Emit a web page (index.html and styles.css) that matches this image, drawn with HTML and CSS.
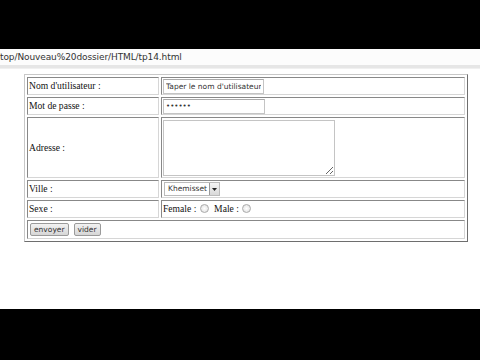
FILE: index.html
```html
<!DOCTYPE html>
<html>
<head>
<meta charset="utf-8">
<link rel="stylesheet" href="styles.css">
</head>
<body>
<div class="topbar"></div>
<div class="urlbar"><span class="url">top/Nouveau%20dossier/HTML/tp14.html</span></div>
<div class="sep"></div>
<main class="page">
  <table class="form">
    <tr class="r1">
      <td class="lbl">Nom d'utilisateur :</td>
      <td class="fld"><input class="txt" type="text" value="Taper le nom d'utilisateur"></td>
    </tr>
    <tr class="r2">
      <td class="lbl">Mot de passe :</td>
      <td class="fld"><input class="txt pwd" type="password" value="123456"></td>
    </tr>
    <tr class="r3">
      <td class="lbl">Adresse :</td>
      <td class="fld"><textarea class="area"></textarea></td>
    </tr>
    <tr class="r4">
      <td class="lbl">Ville :</td>
      <td class="fld"><span class="select"><span class="sel-val">Khemisset</span><span class="sel-btn"><svg width="7" height="5" viewBox="0 0 7 5"><path d="M1 1h5L3.5 4z" fill="#222"/></svg></span></span></td>
    </tr>
    <tr class="r5">
      <td class="lbl">Sexe :</td>
      <td class="fld">Female : <span class="radio"></span> Male : <span class="radio"></span></td>
    </tr>
    <tr class="r6">
      <td colspan="2" class="btns"><button class="btn">envoyer</button><button class="btn">vider</button></td>
    </tr>
  </table>
</main>
<div class="bottombar"></div>
</body>
</html>
```
FILE: styles.css
```css
html, body { margin: 0; padding: 0; }
body { width: 480px; height: 360px; overflow: hidden; background: #fff; font-family: "Liberation Serif", serif; font-size: 9.6px; color: #111; }
.topbar { height: 49px; background: #000; }
.urlbar { height: 16px; background: #fcfcfc; display: flex; align-items: center; overflow: hidden; }
.url { font-family: "DejaVu Sans", sans-serif; font-size: 9px; color: #333; margin-left: 0; white-space: nowrap; letter-spacing: -0.1px; }
.sep { height: 3px; background: #e6e6e6; border-bottom: 1px solid #f0f0f0; }
.page { height: 240px; padding: 5px 0 0 24px; box-sizing: border-box; }
.bottombar { height: 51px; background: #000; }
.form { width: 444px; border: 1px solid; border-color: #c8c8c8 #6e6e6e #6e6e6e #c8c8c8; border-spacing: 2px; border-collapse: separate; }
.form td { border: 1px solid; border-color: #888 #d6d6d6 #d6d6d6 #888; padding: 0 1px; height: 16px; vertical-align: middle; line-height: 12px; }
.lbl { width: 128px; }
.r3 td { height: 59px; }
.txt { width: 101px; height: 15px; box-sizing: border-box; border: 1px solid #c4c4c4; border-top-color: #aaa; padding: 0 2px; font-family: "DejaVu Sans", sans-serif; font-size: 7.5px; color: #333; margin: 0; display: block; }
.pwd { width: 102px; font-size: 7px; letter-spacing: 0; }
.area { width: 172px; height: 56px; box-sizing: border-box; border: 1px solid #c4c4c4; margin: 0; display: block; resize: both; }
.select { display: inline-flex; align-items: stretch; height: 14px; border: 1px solid #bbb; box-sizing: border-box; margin-left: 1px; vertical-align: middle; }
.sel-val { font-family: "DejaVu Sans", sans-serif; font-size: 7.5px; color: #333; padding: 0 2px 0 3px; line-height: 12px; }
.sel-btn { width: 9px; border-left: 1px solid #999; background: linear-gradient(#f4f4f4, #d8d8d8); display: flex; align-items: center; justify-content: center; }
.radio { display: inline-block; width: 7px; height: 7px; border-radius: 50%; border: 1px solid #aaa; background: radial-gradient(#fff, #ddd); vertical-align: -1px; margin: 0 3px 0 1px; }
.btns { padding: 1px 2px !important; height: 15px !important; }
.btn { font-family: "DejaVu Sans", sans-serif; font-size: 7.5px; color: #333; height: 13px; padding: 0 3px; border: 1px solid #9a9a9a; border-radius: 2px; background: linear-gradient(#f2f2f2, #d6d6d6); margin-right: 5px; line-height: 10px; vertical-align: middle; }
```
